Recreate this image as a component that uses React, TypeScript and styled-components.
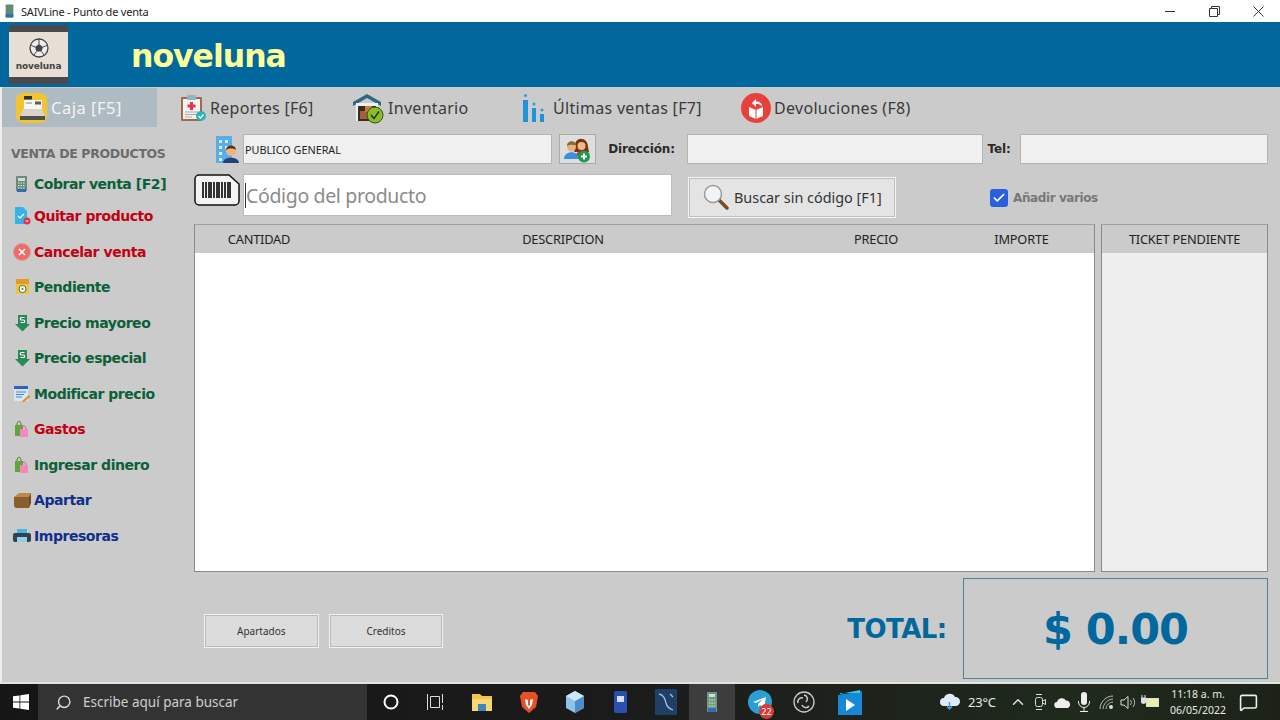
import styled, { createGlobalStyle } from 'styled-components';
import { Search, ChevronUp, MessageSquare, Check } from 'lucide-react';

const Global = createGlobalStyle`
    html, body { margin: 0; padding: 0; }
    body { font-family: "Noto Sans", "Open Sans", sans-serif; overflow: hidden; }
    * { box-sizing: border-box; }
`;

const UI = '"Noto Sans", "Open Sans", sans-serif';
const BLUE = '#00689c';

const Page = styled.div`
    width: 1280px;
    height: 720px;
    display: flex;
    flex-direction: column;
    background: #cbcbcb;
    overflow: hidden;
`;

/* title bar */
const TitleBar = styled.div`
    height: 22px;
    flex: none;
    background: #fff;
    display: flex;
    align-items: center;
    padding-left: 5px;
    font-family: ${UI};
    font-size: 11px;
    letter-spacing: -0.2px;
    color: #222;
`;
const TitleText = styled.span`
    margin-left: 7px;
    flex: 1;
`;
const WinBtn = styled.div`
    width: 44px;
    height: 22px;
    display: flex;
    align-items: center;
    justify-content: center;
`;

/* header */
const Header = styled.div`
    height: 65px;
    flex: none;
    background: ${BLUE};
    display: flex;
    align-items: center;
    padding-left: 9px;
`;
const Logo = styled.div`
    width: 59px;
    height: 59px;
    background: #e7dfd5;
    border-top: 7px solid #4a4a4c;
    border-bottom: 7px solid #4a4a4c;
    display: flex;
    flex-direction: column;
    align-items: center;
    justify-content: center;
    gap: 3px;
    font-family: "DejaVu Sans", sans-serif;
    font-weight: 700;
    font-size: 9px;
    letter-spacing: -0.1px;
    color: #444;
`;
const Brand = styled.div`
    margin-left: 63px;
    margin-top: 2px;
    font-family: "DejaVu Sans", sans-serif;
    font-weight: 700;
    font-size: 31.5px;
    letter-spacing: -1px;
    color: #ffff99;
`;

/* tabs */
const TabBar = styled.div`
    height: 40px;
    flex: none;
    display: flex;
    align-items: stretch;
    border-left: 2px solid #eee;
`;
const Tab = styled.div<{ $left: number; $width: number; $active?: boolean; $pad?: number }>`
    margin-left: ${(p) => p.$left}px;
    width: ${(p) => p.$width}px;
    padding-left: ${(p) => p.$pad ?? 0}px;
    display: flex;
    align-items: center;
    gap: 3px;
    font-family: ${UI};
    font-size: ${(p) => (p.$active ? 16.5 : 16)}px;
    letter-spacing: ${(p) => (p.$active ? 0.5 : 0.3)}px;
    margin-top: 1px;
    background: ${(p) => (p.$active ? '#aebbc3' : 'transparent')};
    color: ${(p) => (p.$active ? '#f4f4f4' : '#3a3a3a')};
`;

/* body */
const Body = styled.div`
    flex: 1;
    display: flex;
    min-height: 0;
    border-left: 2px solid #eee;
`;
const Sidebar = styled.div`
    width: 192px;
    flex: none;
    padding-top: 18px;
    display: flex;
    flex-direction: column;
`;
const SideTitle = styled.div`
    height: 18px;
    margin-left: 9px;
    font-family: "DejaVu Sans", sans-serif;
    font-weight: 700;
    font-size: 12.5px;
    letter-spacing: -0.35px;
    line-height: 18px;
    color: #6b6b6b;
    white-space: nowrap;
`;
const SideItem = styled.div<{ $color: string }>`
    height: 35.5px;
    padding-left: 10px;
    display: flex;
    align-items: center;
    gap: 2px;
    font-family: "DejaVu Sans", sans-serif;
    font-weight: 700;
    font-size: 14px;
    letter-spacing: -0.45px;
    white-space: nowrap;
    color: ${(p) => p.$color};
    &:nth-child(2) {
        padding-top: 6px;
    }
`;

const Main = styled.div`
    width: 1074px;
    padding-top: 7px;
    display: flex;
    flex-direction: column;
`;
const RowOne = styled.div`
    height: 30px;
    display: flex;
    align-items: center;
    padding-left: 22px;
`;
const Field = styled.div<{ $width: number; $left?: number }>`
    width: ${(p) => p.$width}px;
    margin-left: ${(p) => p.$left ?? 0}px;
    height: 30px;
    background: #f0f0f0;
    border: 1px solid #b4b4b4;
    display: flex;
    align-items: center;
    padding-left: 1px;
    font-family: ${UI};
    font-size: 10.8px;
    color: #222;
`;
const SquareBtn = styled.div`
    width: 37px;
    height: 30px;
    margin-left: 7px;
    background: #dedede;
    border: 1px solid #aaa;
    display: flex;
    align-items: center;
    justify-content: center;
`;
const Label = styled.div<{ $left: number; $width: number }>`
    margin-left: ${(p) => p.$left}px;
    width: ${(p) => p.$width}px;
    font-family: "DejaVu Sans", sans-serif;
    font-weight: 700;
    font-size: 12px;
    letter-spacing: -0.15px;
    color: #2a2a2a;
`;
const RowTwo = styled.div`
    height: 57px;
    padding-top: 10px;
    display: flex;
    align-items: flex-start;
`;
const CodeInput = styled.div`
    width: 429px;
    height: 42px;
    margin-left: 3px;
    background: #fff;
    border: 1px solid #bdbdbd;
    display: flex;
    align-items: center;
    padding-left: 1px;
    font-family: ${UI};
    font-size: 19.5px;
    letter-spacing: -0.35px;
    color: #8b8b8b;
`;
const Caret = styled.span`
    width: 1px;
    height: 25px;
    background: #333;
`;
const SearchBtn = styled.div`
    width: 208px;
    height: 41px;
    margin-left: 16px;
    margin-top: 3px;
    background: #e4e4e4;
    border: 1px solid #f4f4f4;
    outline: 1px solid #c0c0c0;
    outline-offset: -2px;
    display: flex;
    align-items: center;
    padding-left: 14px;
    gap: 4px;
    font-family: ${UI};
    font-size: 14.4px;
    color: #333;
`;
const CheckWrap = styled.div`
    margin-left: 94px;
    margin-top: 15px;
    display: flex;
    align-items: center;
    gap: 5px;
    font-family: "DejaVu Sans", sans-serif;
    font-weight: 700;
    font-size: 12px;
    letter-spacing: -0.4px;
    color: #777;
`;
const CheckBox = styled.div`
    width: 18px;
    height: 18px;
    border-radius: 3px;
    background: #2a5fe0;
    display: flex;
    align-items: center;
    justify-content: center;
`;
const Tables = styled.div`
    margin-top: 3px;
    height: 348px;
    display: flex;
    gap: 6px;
`;
const Panel = styled.div<{ $width: number; $bg: string }>`
    width: ${(p) => p.$width}px;
    background: ${(p) => p.$bg};
    border: 1px solid #8a8a8a;
    border-top-color: #a0a0a0;
    display: flex;
    flex-direction: column;
`;
const TableHead = styled.div<{ $cols: string }>`
    height: 28px;
    background: #cbcbcb;
    display: grid;
    grid-template-columns: ${(p) => p.$cols};
    align-items: center;
    text-align: center;
    font-family: ${UI};
    font-size: 12.8px;
    letter-spacing: -0.2px;
    color: #222;
`;
const Bottom = styled.div`
    margin-top: 6px;
    height: 101px;
    display: flex;
    align-items: center;
    padding-left: 10px;
`;
const SmallBtn = styled.div<{ $left?: number }>`
    width: 115px;
    height: 34px;
    margin-left: ${(p) => p.$left ?? 0}px;
    margin-top: 5px;
    background: #dcdcdc;
    border: 1px solid #f2f2f2;
    outline: 1px solid #bbb;
    outline-offset: -2px;
    display: flex;
    align-items: center;
    justify-content: center;
    font-family: ${UI};
    font-size: 10px;
    color: #333;
`;
const TotalLabel = styled.div`
    margin-left: 404px;
    width: 116px;
    font-family: "DejaVu Sans", sans-serif;
    font-weight: 700;
    font-size: 26px;
    letter-spacing: -0.55px;
    color: ${BLUE};
`;
const TotalBox = styled.div`
    width: 306px;
    height: 101px;
    border: 1px solid #4d8796;
    display: flex;
    align-items: center;
    justify-content: center;
    font-family: "DejaVu Sans", sans-serif;
    font-weight: 700;
    font-size: 43px;
    letter-spacing: -1px;
    color: ${BLUE};
`;

/* taskbar */
const Taskbar = styled.div`
    height: 38px;
    flex: none;
    border-top: 2px solid #e4e4dc;
    background: linear-gradient(90deg, #161616 0%, #1b1b1b 50%, #1f2a1c 85%, #1c2218 100%);
    display: flex;
    align-items: center;
    color: #e8e8e8;
    font-family: ${UI};
`;
const StartBtn = styled.div`
    width: 38px;
    height: 100%;
    padding-left: 4px;
    display: flex;
    align-items: center;
    justify-content: center;
`;
const SearchBox = styled.div`
    width: 329px;
    height: 100%;
    background: #333;
    display: flex;
    align-items: center;
    padding-left: 17px;
    gap: 11px;
    font-size: 13.5px;
    color: #cfcfcf;
`;
const TaskIcon = styled.div<{ $width?: number; $active?: boolean }>`
    width: ${(p) => p.$width ?? 46}px;
    height: 100%;
    position: relative;
    flex: none;
    display: flex;
    align-items: center;
    justify-content: center;
    background: ${(p) => (p.$active ? '#3d3d3d' : 'transparent')};
`;
const Badge = styled.span`
    position: absolute;
    right: 11px;
    bottom: 1px;
    width: 15px;
    height: 15px;
    border-radius: 50%;
    background: #d83a36;
    color: #fff;
    font-size: 9px;
    line-height: 15px;
    text-align: center;
`;
const Tray = styled.div`
    margin-left: 62px;
    display: flex;
    align-items: center;
    font-size: 13px;
`;
const Temp = styled.span`
    margin-left: 7px;
    width: 39px;
    white-space: nowrap;
    letter-spacing: -0.2px;
`;
const TrayCell = styled.div`
    width: 22px;
    display: flex;
    align-items: center;
    justify-content: center;
`;
const Clock = styled.div`
    margin-left: 2px;
    width: 70px;
    text-align: center;
    font-size: 10.5px;
    line-height: 16px;
    white-space: nowrap;
`;
const Notify = styled.div`
    margin-left: 6px;
    display: flex;
`;

/* icons */
const RegisterIcon = () => (
    <svg width="32" height="32" viewBox="0 0 32 32">
        <rect x="0" y="1" width="31" height="30" rx="7" fill="#f5c32c" />
        <rect x="8" y="4" width="8" height="3.500" fill="#333" />
        <rect x="8" y="8" width="18" height="9" fill="#f6f6f6" />
        <rect x="19" y="9.500" width="6" height="3" fill="#5a5a5a" />
        <rect x="10" y="10" width="6" height="2" fill="#bbb" />
        <path d="M7 17h19l3 7H4z" fill="#d8d4c8" />
        <rect x="4" y="24" width="25" height="4" fill="#4f4f4f" />
    </svg>
);
const ReportIcon = () => (
    <svg width="27" height="28" viewBox="0 0 27 28">
        <rect x="1" y="3" width="21" height="24" rx="1" fill="#a0694a" />
        <rect x="3" y="5" width="17" height="20" fill="#f2f2f2" />
        <rect x="7" y="1" width="9" height="5" rx="1" fill="#8fb4c6" />
        <path d="M10 8h3v2.500h2.500v3H13V16h-3v-2.500H7.500v-3H10z" fill="#e3374b" />
        <path d="M5 18h13M5 20.500h13M5 23h7" stroke="#aaa" />
        <circle cx="21" cy="22" r="5" fill="#26b5b8" />
        <path d="M18.500 22l2 2 3-3.500" stroke="#fff" strokeWidth="1.500" fill="none" />
    </svg>
);
const StoreIcon = () => (
    <svg width="32" height="32" viewBox="0 0 32 32">
        <path d="M0 10L14 2l14 8v4L14 6 0 14z" fill="#2a6a80" />
        <rect x="3" y="11" width="22" height="18" fill="#efefef" />
        <rect x="5" y="14" width="18" height="15" fill="#3f2a22" />
        <rect x="7" y="19" width="8" height="8" fill="#a35f3a" />
        <rect x="12" y="14" width="7" height="6" fill="#c67b45" />
        <circle cx="22" cy="23" r="8" fill="#8dbb2c" stroke="#35520f" />
        <path d="M18 23l3 3.500 5-7" stroke="#1d3a0a" strokeWidth="1.500" fill="none" />
    </svg>
);
const BarsIcon = () => (
    <svg width="25" height="28" viewBox="0 0 25 28">
        <circle cx="2.500" cy="1.500" r="1.500" fill="#2d9bd8" />
        <rect x="0" y="6" width="5" height="22" fill="#1d95d8" />
        <circle cx="11" cy="10" r="1.500" fill="#2d9bd8" />
        <rect x="9" y="14" width="4" height="14" fill="#1d95d8" />
        <circle cx="19" cy="16" r="1.500" fill="#2d9bd8" />
        <rect x="17" y="20" width="4" height="8" fill="#1d95d8" />
    </svg>
);
const ReturnIcon = () => (
    <svg width="30" height="30" viewBox="0 0 30 30">
        <circle cx="15" cy="15" r="15" fill="#e8413c" />
        <path d="M8 14l7 3 7-3v9l-7 3-7-3z" fill="#fff" />
        <path d="M15 17v9" stroke="#e8413c" />
        <path d="M11 10l4-4v2.500c4 0 6 2 6 5-1.500-2-3-2.500-6-2.500V14z" fill="#fff" />
    </svg>
);
const BuildingIcon = () => (
    <svg width="25" height="27" viewBox="0 0 25 27">
        <rect x="0" y="0" width="16" height="27" fill="#58aee8" />
        <path d="M3 4h3v3H3zM9 4h3v3H9zM3 10h3v3H3zM9 10h3v3H9zM3 16h3v3H3zM3 22h3v3H3z" fill="#d8eefc" />
        <circle cx="15" cy="15" r="5" fill="#f2b47c" />
        <path d="M10 14c0-6 10-6 10 0-3-2-7-2-10 0z" fill="#5a3312" />
        <path d="M7 27c0-7 16-7 16 0z" fill="#23407a" />
    </svg>
);
const PeopleAddIcon = () => (
    <svg width="27" height="27" viewBox="0 0 27 27">
        <path d="M11 11c-1-11 13-11 13 0l1 5H10z" fill="#7a3414" />
        <path d="M11 22c0-9 13-9 13 0z" fill="#a83c28" />
        <circle cx="17.500" cy="10" r="4" fill="#f0b98a" />
        <circle cx="7.500" cy="11" r="4.500" fill="#e8b07c" />
        <path d="M3 10c0-6 9-6 9-1-3 0-6-1-9 1z" fill="#8a6a2a" />
        <path d="M0 23c0-9 15-9 15 0z" fill="#3a8fe0" />
        <circle cx="20" cy="20.500" r="6" fill="#1f9a4c" />
        <path d="M17 20.500h6M20 17.500v6" stroke="#fff" strokeWidth="2" />
    </svg>
);
const BarcodeIcon = () => (
    <svg width="46" height="32" viewBox="0 0 46 32">
        <path d="M5 1h30l10 9v17a4 4 0 0 1-4 4H5a4 4 0 0 1-4-4V5a4 4 0 0 1 4-4z" fill="#f4f4f4" stroke="#111" strokeWidth="1.500" />
        <path d="M9 8v16M12 8v16M15 8v16M17 8v16M20 8v16M23 8v16M25 8v16M28 8v16M31 8v16M34 8v16M36 8v16" stroke="#111" strokeWidth="1.700" />
    </svg>
);
const MagnifierIcon = () => (
    <svg width="27" height="27" viewBox="0 0 27 27">
        <path d="M15 15l9 9" stroke="#7c4a22" strokeWidth="3.500" strokeLinecap="round" />
        <circle cx="10" cy="10" r="8.500" fill="#f0f4f6" stroke="#9a9a9a" strokeWidth="1.500" />
    </svg>
);
const SideIcon = ({ kind }: { kind: string }) => {
    const shapes: Record<string, JSX.Element> = {
        calc: (
            <>
                <rect x="3" y="1" width="11" height="15" rx="1" fill="#6c8a78" />
                <rect x="5" y="3" width="7" height="3" fill="#cfe0d2" />
                <path d="M5 8h7M5 10.500h7M5 13h7" stroke="#dfe8e0" strokeDasharray="1.500 1" />
                <rect x="4" y="14" width="9" height="3" fill="#2f6fb5" />
            </>
        ),
        file: (
            <>
                <path d="M2 0h8l4 4v13H2z" fill="#35b4ea" />
                <path d="M5 9l2 2 4-4" stroke="#fff" strokeWidth="1.200" fill="none" />
                <circle cx="14" cy="14" r="3.500" fill="#e2314a" />
                <path d="M12.500 14h3" stroke="#fff" />
            </>
        ),
        cancel: (
            <>
                <circle cx="9" cy="9" r="8.500" fill="#ef6a6a" stroke="#d99" />
                <path d="M6 6l6 6M12 6l-6 6" stroke="#fff" strokeWidth="1.500" />
            </>
        ),
        pending: (
            <>
                <rect x="3" y="1" width="13" height="15" rx="1" fill="#f3c43a" />
                <rect x="3" y="1" width="13" height="5" fill="#e39a28" />
                <circle cx="9.500" cy="11" r="3.500" fill="#fff" stroke="#3a7a4a" />
                <circle cx="9.500" cy="11" r="1" fill="#3a7a4a" />
            </>
        ),
        dollar: (
            <>
                <path d="M5 1h9v9h3l-7.500 7.500L2 10h3z" fill="#2a8a54" />
                <path d="M11.500 3.500H8.500a1 1 0 0 0 0 2.500h2a1 1 0 0 1 0 2.500h-3" stroke="#fff" strokeWidth="1.200" fill="none" />
            </>
        ),
        edit: (
            <>
                <rect x="1" y="1" width="14" height="15" fill="#d6e6f8" />
                <rect x="1" y="1" width="14" height="3" fill="#2f62c0" />
                <path d="M3 7h10M3 9.500h8M3 12h6" stroke="#4a86d0" />
                <path d="M9 16l7-6 1.500 1.500-7 6z" fill="#e88f2a" />
            </>
        ),
        bags: (
            <>
                <path d="M2 5h8v11H2z" fill="#5ea83a" />
                <path d="M4 5c0-5 4-5 4 0" stroke="#3f7a24" fill="none" />
                <path d="M7 9h8v8H7z" fill="#f08ab8" />
                <path d="M9 9c0-4 4-4 4 0" stroke="#c85a8c" fill="none" />
            </>
        ),
        box: (
            <>
                <path d="M1 6l5-4h12l-2 4z" fill="#b98a4a" />
                <path d="M1 6h15v11H4a3 3 0 0 1-3-3z" fill="#8a5e2c" />
                <path d="M16 6l2-4v10l-2 5z" fill="#6f4a22" />
            </>
        ),
        printer: (
            <>
                <rect x="4" y="2" width="10" height="6" fill="#49b4dc" />
                <rect x="0" y="6" width="18" height="9" rx="2" fill="#33424f" />
                <rect x="4" y="10" width="10" height="5" fill="#8fd0ea" />
            </>
        ),
    };
    return (
        <svg width="20" height="18" viewBox="0 0 18 18" style={{ flex: 'none' }}>
            {shapes[kind]}
        </svg>
    );
};

const CalcTaskIcon = () => (
    <svg width="14" height="20" viewBox="0 0 14 20">
        <rect x="2" y="0" width="10" height="20" rx="1" fill="#6f9a82" />
        <rect x="4" y="2" width="6" height="3" fill="#c9e0cf" />
        <path d="M4 8h6M4 11h6M4 14h6" stroke="#dfe8e0" strokeDasharray="1.500 1" />
        <rect x="3" y="16" width="8" height="4" fill="#2f6fb5" />
    </svg>
);

const sideItems = [
    { label: 'Cobrar venta [F2]', kind: 'calc', color: '#0b6038' },
    { label: 'Quitar producto', kind: 'file', color: '#c20012' },
    { label: 'Cancelar venta', kind: 'cancel', color: '#c20012' },
    { label: 'Pendiente', kind: 'pending', color: '#0b6038' },
    { label: 'Precio mayoreo', kind: 'dollar', color: '#0b6038' },
    { label: 'Precio especial', kind: 'dollar', color: '#0b6038' },
    { label: 'Modificar precio', kind: 'edit', color: '#0b6038' },
    { label: 'Gastos', kind: 'bags', color: '#c20012' },
    { label: 'Ingresar dinero', kind: 'bags', color: '#0b6038' },
    { label: 'Apartar', kind: 'box', color: '#0f2f8c' },
    { label: 'Impresoras', kind: 'printer', color: '#0f2f8c' },
];

export default function App() {
    return (
        <Page>
            <Global />
            <TitleBar>
                <svg width="9" height="14" viewBox="0 0 14 20">
                    <rect x="1" y="0" width="12" height="20" rx="1" fill="#5f8a78" />
                    <rect x="1" y="15" width="12" height="5" fill="#2f6fb5" />
                </svg>
                <TitleText>SAIVLine - Punto de venta</TitleText>
                <WinBtn>
                    <svg width="10" height="10"><path d="M0 5.500h10" stroke="#333" /></svg>
                </WinBtn>
                <WinBtn>
                    <svg width="11" height="11"><path d="M.5 2.500h8v8h-8zM2.500 2.500v-2h8v8h-2" stroke="#333" fill="none" /></svg>
                </WinBtn>
                <WinBtn>
                    <svg width="11" height="11"><path d="M.5.500l10 10M10.500.500l-10 10" stroke="#333" /></svg>
                </WinBtn>
            </TitleBar>

            <Header>
                <Logo>
                    <svg width="20" height="20" viewBox="0 0 20 20">
                        <circle cx="10" cy="10" r="9" fill="#eee" stroke="#444" strokeWidth="1.300" />
                        <path d="M10 6l4 3-1.500 4.500h-5L6 9z" fill="#444" />
                        <path d="M10 1v5M14 9l5-2M12.500 13.500l3 4M7.500 13.500l-3 4M6 9L1 7" stroke="#444" />
                    </svg>
                    noveluna
                </Logo>
                <Brand>noveluna</Brand>
            </Header>

            <TabBar>
                <Tab $left={0} $width={155} $pad={14} $active>
                    <RegisterIcon />
                    Caja [F5]
                </Tab>
                <Tab $left={23} $width={173}>
                    <ReportIcon />
                    Reportes [F6]
                </Tab>
                <Tab $left={0} $width={170}>
                    <StoreIcon />
                    Inventario
                </Tab>
                <Tab $left={0} $width={218}>
                    <BarsIcon />
                    <span style={{ marginLeft: 2 }}>Últimas ventas [F7]</span>
                </Tab>
                <Tab $left={0} $width={220}>
                    <ReturnIcon />
                    Devoluciones (F8)
                </Tab>
            </TabBar>

            <Body>
                <Sidebar>
                    <SideTitle>VENTA DE PRODUCTOS</SideTitle>
                    {sideItems.map((item) => (
                        <SideItem key={item.label} $color={item.color}>
                            <SideIcon kind={item.kind} />
                            {item.label}
                        </SideItem>
                    ))}
                </Sidebar>

                <Main>
                    <RowOne>
                        <BuildingIcon />
                        <Field $width={310} $left={2}>PUBLICO GENERAL</Field>
                        <SquareBtn>
                            <PeopleAddIcon />
                        </SquareBtn>
                        <Label $left={12} $width={79}>Dirección:</Label>
                        <Field $width={296} />
                        <Label $left={5} $width={33}>Tel:</Label>
                        <Field $width={248} />
                    </RowOne>

                    <RowTwo>
                        <BarcodeIcon />
                        <CodeInput>
                            <Caret />
                            Código del producto
                        </CodeInput>
                        <SearchBtn>
                            <MagnifierIcon />
                            Buscar sin código [F1]
                        </SearchBtn>
                        <CheckWrap>
                            <CheckBox>
                                <Check size={14} color="#fff" strokeWidth={3} />
                            </CheckBox>
                            Añadir varios
                        </CheckWrap>
                    </RowTwo>

                    <Tables>
                        <Panel $width={901} $bg="#fff">
                            <TableHead $cols="128px 480px 146px 145px">
                                <span>CANTIDAD</span>
                                <span>DESCRIPCION</span>
                                <span>PRECIO</span>
                                <span>IMPORTE</span>
                            </TableHead>
                        </Panel>
                        <Panel $width={167} $bg="#eeeeee">
                            <TableHead $cols="1fr">
                                <span>TICKET PENDIENTE</span>
                            </TableHead>
                        </Panel>
                    </Tables>

                    <Bottom>
                        <SmallBtn>Apartados</SmallBtn>
                        <SmallBtn $left={10}>Creditos</SmallBtn>
                        <TotalLabel>TOTAL:</TotalLabel>
                        <TotalBox>$ 0.00</TotalBox>
                    </Bottom>
                </Main>
            </Body>

            <Taskbar>
                <StartBtn>
                    <svg width="16" height="16" viewBox="0 0 16 16">
                        <path d="M0 2.300l6.500-.9v6.200H0zM7.300 1.300L16 0v7.600H7.300zM0 8.400h6.500v6.200L0 13.700zM7.300 8.400H16V16l-8.700-1.200z" fill="#fff" />
                    </svg>
                </StartBtn>
                <SearchBox>
                    <Search size={17} color="#ddd" style={{ transform: 'scaleX(-1)' }} />
                    Escribe aquí para buscar
                </SearchBox>
                <TaskIcon $width={47}>
                    <svg width="16" height="16"><circle cx="8" cy="8" r="6.500" stroke="#fff" strokeWidth="2" fill="none" /></svg>
                </TaskIcon>
                <TaskIcon $width={44}>
                    <svg width="18" height="16"><path d="M3.500 2.500h9v11h-9zM.5 0v16M15.500 0v9M15.500 11v5" stroke="#ddd" fill="none" /></svg>
                </TaskIcon>
                <TaskIcon $width={48}>
                    <svg width="22" height="20" viewBox="0 0 22 20">
                        <path d="M1 2h8l2 2h10v15H1z" fill="#f3c44e" />
                        <rect x="1" y="7" width="20" height="12" fill="#f7d774" />
                        <rect x="7" y="12" width="8" height="7" fill="#3b87b8" />
                    </svg>
                </TaskIcon>
                <TaskIcon>
                    <svg width="18" height="22" viewBox="0 0 18 22">
                        <path d="M3 1h12l3 4-2 11-7 6-7-6L0 5z" fill="#e8502a" />
                        <path d="M5 8l3 1v5l1 1 1-1V9l3-1-1 6-3 4-3-4z" fill="#fff" />
                    </svg>
                </TaskIcon>
                <TaskIcon $width={45}>
                    <svg width="20" height="22" viewBox="0 0 20 22">
                        <path d="M10 0l9 5v12l-9 5-9-5V5z" fill="#8fc3ea" />
                        <path d="M10 10l9-5v12l-9 5z" fill="#4d8cc8" />
                        <path d="M10 0l9 5-9 5-9-5z" fill="#cfe6f7" />
                    </svg>
                </TaskIcon>
                <TaskIcon>
                    <svg width="14" height="22" viewBox="0 0 14 22">
                        <rect x="1" y="0" width="13" height="22" rx="2" fill="#2b4fb0" />
                        <rect x="4" y="5" width="7" height="6" fill="#cfe0f7" />
                    </svg>
                </TaskIcon>
                <TaskIcon>
                    <svg width="22" height="26" viewBox="0 0 22 26">
                        <rect width="22" height="26" rx="1" fill="#1f3f66" />
                        <path d="M4 5c5 1 6 5 7 9s4 6 7 7M15 5l3 3" stroke="#9cc3e4" strokeWidth="1.300" fill="none" />
                    </svg>
                </TaskIcon>
                <TaskIcon $active>
                    <CalcTaskIcon />
                </TaskIcon>
                <TaskIcon $width={50}>
                    <svg width="24" height="24" viewBox="0 0 24 24">
                        <circle cx="12" cy="12" r="12" fill="#2a9fd6" />
                        <path d="M5 12l13-5-2 11-4-3-2 2v-3l5-5-7 4z" fill="#fff" />
                    </svg>
                    <Badge>22</Badge>
                </TaskIcon>
                <TaskIcon $width={38}>
                    <svg width="22" height="22" viewBox="0 0 22 22">
                        <circle cx="11" cy="11" r="10" fill="#222" stroke="#ccc" strokeWidth="1.300" />
                        <path d="M11 4a4 4 0 0 1 2 7M16 15a4 4 0 0 1-7-1M5 12a4 4 0 0 1 5-5" stroke="#ccc" strokeWidth="1.500" fill="none" />
                    </svg>
                </TaskIcon>
                <TaskIcon $width={54}>
                    <svg width="24" height="26" viewBox="0 0 24 26">
                        <path d="M0 6l24-4v24H0z" fill="#1688d8" />
                        <path d="M2 5l20-4v3H2z" fill="#41c1e8" />
                        <path d="M8 10l9 6-9 6z" fill="#fff" />
                    </svg>
                </TaskIcon>
                <Tray>
                    <svg width="22" height="18" viewBox="0 0 22 18">
                        <path d="M5 13a4 4 0 0 1 0-8 6 6 0 0 1 11-1 4.500 4.500 0 0 1 1 9z" fill="#dcecf8" />
                        <path d="M10.500 9v7M8 13.500l2.500 2.500 2.500-2.500" stroke="#4a9be0" strokeWidth="1.500" fill="none" />
                    </svg>
                    <Temp>23°C</Temp>
                    <TrayCell>
                        <ChevronUp size={18} color="#ddd" />
                    </TrayCell>
                    <TrayCell>
                        <svg width="14" height="20" viewBox="0 0 14 20">
                            <rect x="2.500" y="5.500" width="7" height="9" rx="2" stroke="#ddd" fill="none" />
                            <path d="M9.500 9l3-1.500v5l-3-1.500M3 2.500h6M3 17.500h6" stroke="#ddd" fill="none" />
                        </svg>
                    </TrayCell>
                    <TrayCell>
                        <svg width="17" height="11" viewBox="0 0 17 11">
                            <path d="M3.500 11a3 3 0 0 1-.5-6 5 5 0 0 1 9-1.500A4 4 0 0 1 14 11z" fill="#eee" />
                        </svg>
                    </TrayCell>
                    <TrayCell>
                        <svg width="14" height="20" viewBox="0 0 14 20">
                            <rect x="4" y="0" width="6" height="13" rx="3" fill="#eee" />
                            <path d="M1.500 9v1a5.500 5.500 0 0 0 11 0V9M7 16v3M3 19.500h8" stroke="#eee" fill="none" />
                        </svg>
                    </TrayCell>
                    <TrayCell>
                        <svg width="15" height="15" viewBox="0 0 15 15">
                            <path d="M1 14C1 7 7 1 14 1M4 14c0-5 5-10 10-10M7 14c0-3.500 3.500-7 7-7" stroke="#bbb" fill="none" />
                            <circle cx="12" cy="12" r="2" fill="#ddd" />
                        </svg>
                    </TrayCell>
                    <TrayCell>
                        <svg width="16" height="15" viewBox="0 0 16 15">
                            <path d="M1 5h3l4-3.500v12L4 10H1z" stroke="#ddd" fill="none" />
                            <path d="M10.500 5a4 4 0 0 1 0 5M13 3a7 7 0 0 1 0 9" stroke="#bbb" fill="none" />
                        </svg>
                    </TrayCell>
                    <TrayCell>
                        <svg width="18" height="14" viewBox="0 0 18 14">
                            <rect x="5.500" y="3.500" width="12" height="8" fill="#e8eeb0" stroke="#ddd" />
                            <path d="M1 0v3M4 0v3M0 3h5v3a2.500 2.500 0 0 1-5 0z" fill="#ddd" stroke="#ddd" />
                        </svg>
                    </TrayCell>
                    <Clock>
                        11:18 a. m.
                        <br />
                        06/05/2022
                    </Clock>
                </Tray>
                <Notify>
                    <MessageSquare size={19} color="#eee" />
                </Notify>
            </Taskbar>
        </Page>
    );
}
